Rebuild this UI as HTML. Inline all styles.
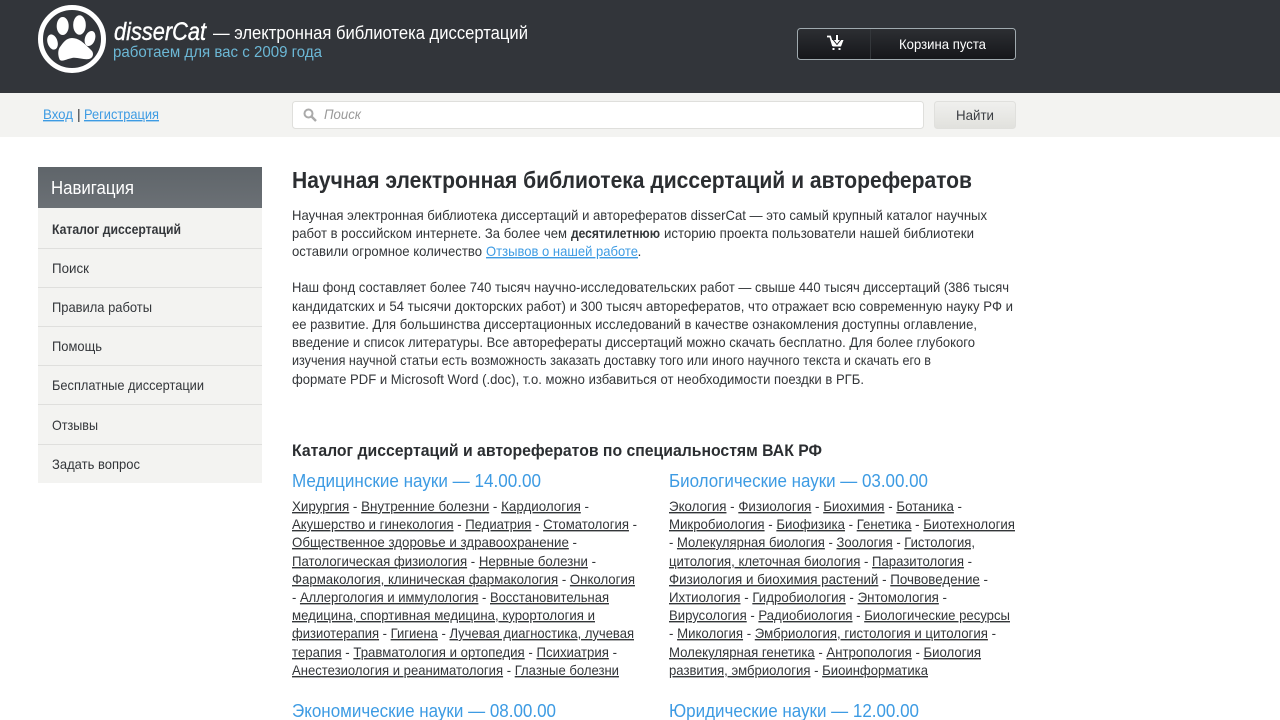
<!DOCTYPE html>
<html lang="ru"><head><meta charset="utf-8"><title>disserCat</title>
<style>
html,body{margin:0;padding:0;width:1280px;height:720px;overflow:hidden;background:#fff}
svg{display:block;position:absolute;left:0;top:0}
text{font-family:"Liberation Sans","DejaVu Sans",sans-serif;font-size:14px;fill:#333639}
.u{text-decoration:underline}
.lk{fill:#3d9be3;text-decoration:underline}
.b{font-weight:bold}
.nav{font-size:14px;fill:#33363a}
.sec{font-size:18px;fill:#3d9be3}
</style></head><body>
<svg width="1280" height="720" viewBox="0 0 1280 720" lang="ru">
<defs>
<linearGradient id="cg" x1="0" y1="0" x2="0" y2="1"><stop offset="0" stop-color="#2d2f33"/><stop offset="1" stop-color="#15161a"/></linearGradient>
<linearGradient id="bg" x1="0" y1="0" x2="0" y2="1"><stop offset="0" stop-color="#f0f0ee"/><stop offset="1" stop-color="#e1e1dd"/></linearGradient>
<linearGradient id="ng" x1="0" y1="0" x2="0" y2="1"><stop offset="0" stop-color="#5f656a"/><stop offset="1" stop-color="#6b7075"/></linearGradient>
</defs>
<rect width="1280" height="93" fill="#32353a"/>
<rect y="93" width="1280" height="44" fill="#f3f3f1"/>

<circle cx="72" cy="39" r="31.5" fill="none" stroke="#fff" stroke-width="5"/>
<g fill="#fff">
<ellipse cx="62.7" cy="26" rx="6" ry="9"/>
<ellipse cx="79.5" cy="25" rx="6.3" ry="9.8"/>
<ellipse cx="52.5" cy="42" rx="5" ry="7.8" transform="rotate(-18 52.5 42)"/>
<ellipse cx="90" cy="38.5" rx="5" ry="7.8" transform="rotate(20 90 38.5)"/>
<path d="M72 38C66 38 63 43 60 47C57 51 58.500 58 60 60C62 62 67 59 72 58C77 57 84 60 89 59C93 58 94 54 92 51C88 47 85 44 81 41C78 39 75 38 72 38Z"/>
</g>

<text x="114" y="40" textLength="92" lengthAdjust="spacingAndGlyphs" style="font-size:25px;font-style:italic;fill:#fff;stroke:#fff;stroke-width:.4">disserCat</text>
<text x="213" y="39" textLength="315" lengthAdjust="spacingAndGlyphs" style="font-size:18px;fill:#fff">— электронная библиотека диссертаций</text>
<text x="113" y="57" textLength="209" lengthAdjust="spacingAndGlyphs" style="font-size:16px;fill:#6cb8d6">работаем для вас с 2009 года</text>

<rect x="797.500" y="28.500" width="218" height="31" rx="3" fill="url(#cg)" stroke="#a0aaaf"/>
<rect x="870" y="29" width="1" height="30" fill="#34373b"/>
<path d="M830.500 40H843.500L841 46.500H833Z" fill="#fff"/>
<path d="M827 36.500H830.200L833 46" fill="none" stroke="#fff" stroke-width="1.700"/>
<path d="M835.500 34.500H838.500V39.500H841L837 44.500L833 39.500H835.500Z" fill="#fff" stroke="#1f2024" stroke-width="1"/>
<rect x="832.500" y="48" width="2" height="2" fill="#fff"/><rect x="838.500" y="48" width="2" height="2" fill="#fff"/>
<text x="899" y="49" textLength="87" lengthAdjust="spacingAndGlyphs" style="font-size:14px;fill:#fff">Корзина пуста</text>

<text x="43" y="119" textLength="30" lengthAdjust="spacingAndGlyphs" class="lk">Вход</text>
<text x="77" y="119" style="fill:#33363a">|</text>
<text x="84" y="119" textLength="75" lengthAdjust="spacingAndGlyphs" class="lk">Регистрация</text>

<rect x="292.500" y="101.500" width="631" height="27" rx="3" fill="#fff" stroke="#dfdfdc"/>
<circle cx="308.500" cy="113.500" r="4" fill="none" stroke="#aaa" stroke-width="2"/>
<path d="M311.500 116.500L316 121" stroke="#aaa" stroke-width="2.400"/>
<text x="324" y="119" textLength="37" lengthAdjust="spacingAndGlyphs" style="font-style:italic;fill:#9a9a9a">Поиск</text>
<rect x="934.500" y="101.500" width="81" height="27" rx="3" fill="url(#bg)" stroke="#e0e0dd"/>
<text x="956" y="120" textLength="38" lengthAdjust="spacingAndGlyphs" style="fill:#3a3d42">Найти</text>

<rect x="38" y="167" width="224" height="41" fill="url(#ng)"/>
<rect x="38" y="208" width="224" height="275" fill="#f3f3f1"/>
<g fill="#dfdfdd">
<rect x="38" y="248" width="224" height="1"/><rect x="38" y="287" width="224" height="1"/>
<rect x="38" y="326" width="224" height="1"/><rect x="38" y="365" width="224" height="1"/>
<rect x="38" y="404" width="224" height="1"/><rect x="38" y="444" width="224" height="1"/>
</g>
<text x="51" y="194" textLength="83" lengthAdjust="spacingAndGlyphs" style="font-size:18px;fill:#fff">Навигация</text>
<text x="52" y="234" textLength="129" lengthAdjust="spacingAndGlyphs" class="nav b">Каталог диссертаций</text>
<text x="52" y="273" textLength="37" lengthAdjust="spacingAndGlyphs" class="nav">Поиск</text>
<text x="52" y="312" textLength="100" lengthAdjust="spacingAndGlyphs" class="nav">Правила работы</text>
<text x="52" y="351" textLength="50" lengthAdjust="spacingAndGlyphs" class="nav">Помощь</text>
<text x="52" y="390" textLength="152" lengthAdjust="spacingAndGlyphs" class="nav">Бесплатные диссертации</text>
<text x="52" y="430" textLength="46" lengthAdjust="spacingAndGlyphs" class="nav">Отзывы</text>
<text x="52" y="469" textLength="88" lengthAdjust="spacingAndGlyphs" class="nav">Задать вопрос</text>

<text x="292" y="188" textLength="680" lengthAdjust="spacingAndGlyphs" class="b" style="font-size:23px;fill:#2b2e31">Научная электронная библиотека диссертаций и авторефератов</text>

<text x="292" y="220" textLength="695" lengthAdjust="spacingAndGlyphs">Научная электронная библиотека диссертаций и авторефератов disserCat — это самый крупный каталог научных</text>
<text x="292" y="238" textLength="275" lengthAdjust="spacingAndGlyphs">работ в российском интернете. За более чем</text>
<text x="571" y="238" textLength="89" lengthAdjust="spacingAndGlyphs" class="b">десятилетнюю</text>
<text x="664" y="238" textLength="310" lengthAdjust="spacingAndGlyphs">историю проекта пользователи нашей библиотеки</text>
<text x="292" y="256" textLength="190" lengthAdjust="spacingAndGlyphs">оставили огромное количество</text>
<text x="486" y="256" textLength="152" lengthAdjust="spacingAndGlyphs" class="lk">Отзывов о нашей работе</text>
<text x="637.500" y="256">.</text>

<text x="292" y="292" textLength="717" lengthAdjust="spacingAndGlyphs">Наш фонд составляет более 740 тысяч научно-исследовательских работ — свыше 440 тысяч диссертаций (386 тысяч</text>
<text x="292" y="311" textLength="721" lengthAdjust="spacingAndGlyphs">кандидатских и 54 тысячи докторских работ) и 300 тысяч авторефератов, что отражает всю современную науку РФ и</text>
<text x="292" y="329" textLength="685" lengthAdjust="spacingAndGlyphs">ее развитие. Для большинства диссертационных исследований в качестве ознакомления доступны оглавление,</text>
<text x="292" y="347" textLength="683" lengthAdjust="spacingAndGlyphs">введение и список литературы. Все авторефераты диссертаций можно скачать бесплатно. Для более глубокого</text>
<text x="292" y="365" textLength="639" lengthAdjust="spacingAndGlyphs">изучения научной статьи есть возможность заказать доставку того или иного научного текста и скачать его в</text>
<text x="292" y="384" textLength="572" lengthAdjust="spacingAndGlyphs">формате PDF и Microsoft Word (.doc), т.о. можно избавиться от необходимости поездки в РГБ.</text>

<text x="292" y="456" textLength="530" lengthAdjust="spacingAndGlyphs" class="b" style="font-size:17px;fill:#2b2e31">Каталог диссертаций и авторефератов по специальностям ВАК РФ</text>

<text x="292" y="487" textLength="249" lengthAdjust="spacingAndGlyphs" class="sec">Медицинские науки — 14.00.00</text>
<text x="669" y="487" textLength="259" lengthAdjust="spacingAndGlyphs" class="sec">Биологические науки — 03.00.00</text>

<text x="292" y="511" textLength="297" lengthAdjust="spacingAndGlyphs"><tspan class="u">Хирургия</tspan> - <tspan class="u">Внутренние болезни</tspan> - <tspan class="u">Кардиология</tspan> -</text>
<text x="292" y="529" textLength="345" lengthAdjust="spacingAndGlyphs"><tspan class="u">Акушерство и гинекология</tspan> - <tspan class="u">Педиатрия</tspan> - <tspan class="u">Стоматология</tspan> -</text>
<text x="292" y="547" textLength="285" lengthAdjust="spacingAndGlyphs"><tspan class="u">Общественное здоровье и здравоохранение</tspan> -</text>
<text x="292" y="566" textLength="304" lengthAdjust="spacingAndGlyphs"><tspan class="u">Патологическая физиология</tspan> - <tspan class="u">Нервные болезни</tspan> -</text>
<text x="292" y="584" textLength="343" lengthAdjust="spacingAndGlyphs"><tspan class="u">Фармакология, клиническая фармакология</tspan> - <tspan class="u">Онкология</tspan></text>
<text x="292" y="602" textLength="317" lengthAdjust="spacingAndGlyphs">- <tspan class="u">Аллергология и иммулология</tspan> - <tspan class="u">Восстановительная</tspan></text>
<text x="292" y="620" textLength="303" lengthAdjust="spacingAndGlyphs" class="u">медицина, спортивная медицина, курортология и</text>
<text x="292" y="638" textLength="342" lengthAdjust="spacingAndGlyphs"><tspan class="u">физиотерапия</tspan> - <tspan class="u">Гигиена</tspan> - <tspan class="u">Лучевая диагностика, лучевая</tspan></text>
<text x="292" y="657" textLength="325" lengthAdjust="spacingAndGlyphs"><tspan class="u">терапия</tspan> - <tspan class="u">Травматология и ортопедия</tspan> - <tspan class="u">Психиатрия</tspan> -</text>
<text x="292" y="675" textLength="327" lengthAdjust="spacingAndGlyphs"><tspan class="u">Анестезиология и реаниматология</tspan> - <tspan class="u">Глазные болезни</tspan></text>

<text x="669" y="511" textLength="293" lengthAdjust="spacingAndGlyphs"><tspan class="u">Экология</tspan> - <tspan class="u">Физиология</tspan> - <tspan class="u">Биохимия</tspan> - <tspan class="u">Ботаника</tspan> -</text>
<text x="669" y="529" textLength="346" lengthAdjust="spacingAndGlyphs"><tspan class="u">Микробиология</tspan> - <tspan class="u">Биофизика</tspan> - <tspan class="u">Генетика</tspan> - <tspan class="u">Биотехнология</tspan></text>
<text x="669" y="547" textLength="306" lengthAdjust="spacingAndGlyphs">- <tspan class="u">Молекулярная биология</tspan> - <tspan class="u">Зоология</tspan> - <tspan class="u">Гистология,</tspan></text>
<text x="669" y="566" textLength="303" lengthAdjust="spacingAndGlyphs"><tspan class="u">цитология, клеточная биология</tspan> - <tspan class="u">Паразитология</tspan> -</text>
<text x="669" y="584" textLength="319" lengthAdjust="spacingAndGlyphs"><tspan class="u">Физиология и биохимия растений</tspan> - <tspan class="u">Почвоведение</tspan> -</text>
<text x="669" y="602" textLength="278" lengthAdjust="spacingAndGlyphs"><tspan class="u">Ихтиология</tspan> - <tspan class="u">Гидробиология</tspan> - <tspan class="u">Энтомология</tspan> -</text>
<text x="669" y="620" textLength="341" lengthAdjust="spacingAndGlyphs"><tspan class="u">Вирусология</tspan> - <tspan class="u">Радиобиология</tspan> - <tspan class="u">Биологические ресурсы</tspan></text>
<text x="669" y="638" textLength="327" lengthAdjust="spacingAndGlyphs">- <tspan class="u">Микология</tspan> - <tspan class="u">Эмбриология, гистология и цитология</tspan> -</text>
<text x="669" y="657" textLength="312" lengthAdjust="spacingAndGlyphs"><tspan class="u">Молекулярная генетика</tspan> - <tspan class="u">Антропология</tspan> - <tspan class="u">Биология</tspan></text>
<text x="669" y="675" textLength="259" lengthAdjust="spacingAndGlyphs"><tspan class="u">развития, эмбриология</tspan> - <tspan class="u">Биоинформатика</tspan></text>

<text x="292" y="717" textLength="264" lengthAdjust="spacingAndGlyphs" class="sec">Экономические науки — 08.00.00</text>
<text x="669" y="717" textLength="250" lengthAdjust="spacingAndGlyphs" class="sec">Юридические науки — 12.00.00</text>
</svg>
</body></html>
